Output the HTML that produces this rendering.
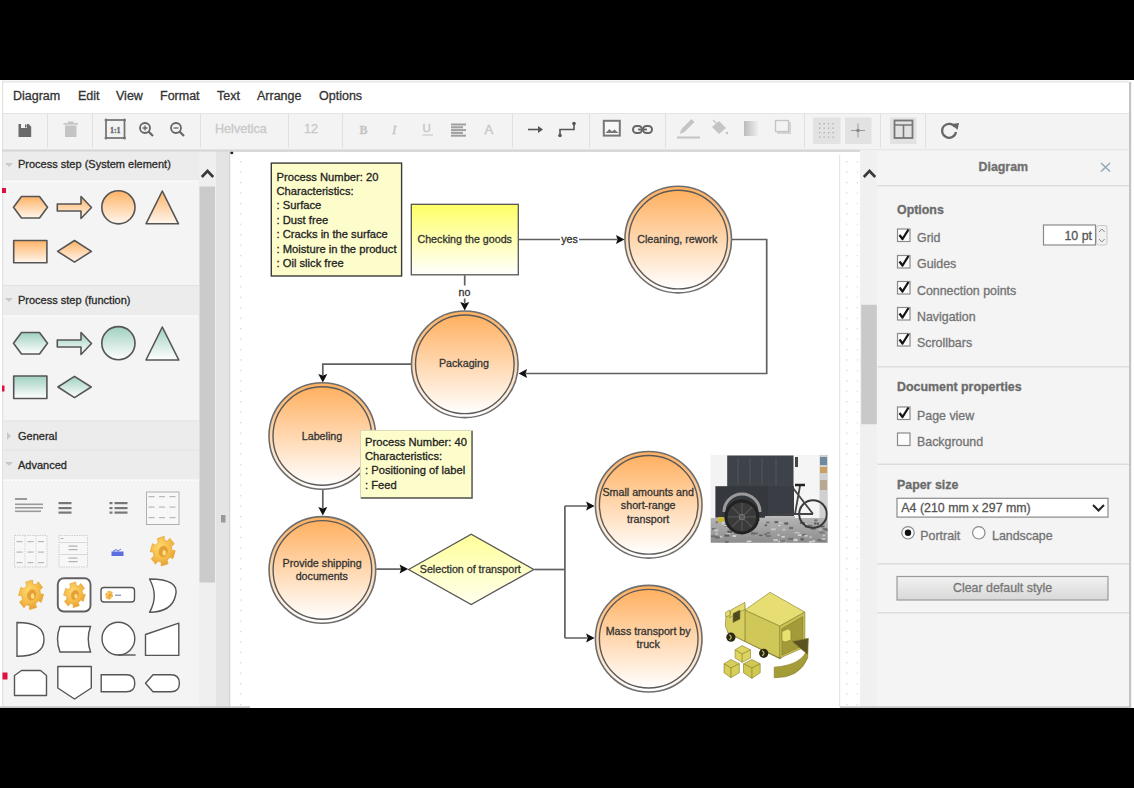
<!DOCTYPE html>
<html><head><meta charset="utf-8">
<style>
html,body{margin:0;padding:0;background:#000;width:1134px;height:788px;overflow:hidden}
svg{display:block;font-family:"Liberation Sans",sans-serif}
text{stroke:currentColor;stroke-width:0.3px}
</style></head><body>
<svg width="1134" height="788" viewBox="0 0 1134 788">
<defs>
<linearGradient id="gOr" x1="0" y1="0" x2="0" y2="1"><stop offset="0" stop-color="#ffb060"/><stop offset="1" stop-color="#ffffff"/></linearGradient>
<linearGradient id="gOrS" x1="0" y1="0" x2="0" y2="1"><stop offset="0" stop-color="#ffb366"/><stop offset="1" stop-color="#fff6ee"/></linearGradient>
<linearGradient id="gTe" x1="0" y1="0" x2="0" y2="1"><stop offset="0" stop-color="#9fd0c0"/><stop offset="1" stop-color="#ffffff"/></linearGradient>
<linearGradient id="gYe" x1="0" y1="0" x2="0" y2="1"><stop offset="0" stop-color="#ffff66"/><stop offset="1" stop-color="#ffffff"/></linearGradient>
<linearGradient id="gYe2" x1="0" y1="0" x2="0" y2="1"><stop offset="0" stop-color="#ffff99"/><stop offset="1" stop-color="#ffffee"/></linearGradient>
<linearGradient id="gBtn" x1="0" y1="0" x2="0" y2="1"><stop offset="0" stop-color="#f2f2f2"/><stop offset="1" stop-color="#d8d8d8"/></linearGradient>
<linearGradient id="gGrad" x1="0" y1="0" x2="1" y2="0"><stop offset="0" stop-color="#bbbbbb"/><stop offset="1" stop-color="#eeeeee"/></linearGradient>
<pattern id="dotsL" x="240.2" y="161.0" width="10.44" height="10.44" patternUnits="userSpaceOnUse"><rect x="0" y="0" width="1.3" height="1.3" fill="#d4d4d4"/></pattern>
<pattern id="dotsR1" x="846.2" y="161.0" width="10.44" height="10.44" patternUnits="userSpaceOnUse"><rect x="0" y="0" width="1.3" height="1.3" fill="#d4d4d4"/></pattern>
<pattern id="dotsR2" x="856.6" y="161.0" width="10.44" height="10.44" patternUnits="userSpaceOnUse"><rect x="0" y="0" width="1.3" height="1.3" fill="#d4d4d4"/></pattern>
</defs>

<!-- black background -->
<rect x="0" y="0" width="1134" height="788" fill="#000"/>
<!-- app frame -->
<rect x="0" y="80" width="1134" height="628" fill="#fff"/>

<!-- menu bar -->
<rect x="2" y="80.6" width="1127" height="2" fill="#e8e8e8"/>
<g font-size="12.5" fill="#333" color="#333">
<text x="13" y="99.6">Diagram</text>
<text x="78" y="99.6">Edit</text>
<text x="116" y="99.6">View</text>
<text x="160" y="99.6">Format</text>
<text x="217" y="99.6">Text</text>
<text x="257" y="99.6">Arrange</text>
<text x="319" y="99.6">Options</text>
</g>

<!-- toolbar -->
<rect x="2" y="113" width="1127" height="38" fill="#f3f3f3"/>
<rect x="2" y="113" width="1127" height="1" fill="#e4e4e4"/>
<rect x="2" y="149.2" width="1127" height="1" fill="#e4e4e4"/>

<g fill="#e0e0e0">
<rect x="47" y="114" width="1" height="34"/>
<rect x="92" y="114" width="1" height="34"/>
<rect x="200" y="114" width="1" height="34"/>
<rect x="288" y="114" width="1" height="34"/>
<rect x="342" y="114" width="1" height="34"/>
<rect x="512" y="114" width="1" height="34"/>
<rect x="589" y="114" width="1" height="34"/>
<rect x="665" y="114" width="1" height="34"/>
<rect x="804" y="114" width="1" height="34"/>
<rect x="880" y="114" width="1" height="34"/>
<rect x="925" y="114" width="1" height="34"/>
</g>
<!-- toolbar icons -->
<g id="tbicons">
<!-- save -->
<path d="M18.5 124 h10 l2.7 2.7 v10.3 h-12.7 z" fill="#6a6a6a"/>
<rect x="21" y="124" width="6" height="4" fill="#f3f3f3"/>
<rect x="25" y="124.5" width="1.5" height="3" fill="#6a6a6a"/>
<!-- trash -->
<rect x="63.5" y="123" width="14.5" height="1.6" fill="#c4c4c4"/>
<rect x="68" y="121.5" width="5.5" height="1.5" fill="#c4c4c4"/>
<rect x="65" y="125.5" width="11.5" height="11.5" fill="#c4c4c4"/>
<!-- 1:1 -->
<rect x="106" y="120" width="18.5" height="18" fill="none" stroke="#707070" stroke-width="1.7"/>
<circle cx="106" cy="120" r="1.5" fill="#777"/><circle cx="124.5" cy="120" r="1.5" fill="#777"/>
<circle cx="106" cy="138" r="1.5" fill="#777"/><circle cx="124.5" cy="138" r="1.5" fill="#777"/>
<text x="115.3" y="132.5" font-size="8" font-weight="bold" fill="#666" text-anchor="middle" font-family="Liberation Serif" color="#666">1:1</text>
<!-- zoom in -->
<circle cx="145" cy="128" r="5" fill="none" stroke="#666" stroke-width="1.8"/>
<path d="M148.5 131.5 l4.5 4.5" stroke="#666" stroke-width="2.2"/>
<path d="M142.5 128 h5 M145 125.5 v5" stroke="#666" stroke-width="1.3"/>
<!-- zoom out -->
<circle cx="176" cy="128" r="5" fill="none" stroke="#666" stroke-width="1.8"/>
<path d="M179.5 131.5 l4.5 4.5" stroke="#666" stroke-width="2.2"/>
<path d="M173.5 128 h5" stroke="#666" stroke-width="1.3"/>
<text x="215" y="133.3" font-size="12.6" fill="#c8c8c8" color="#c8c8c8">Helvetica</text>
<text x="304" y="133.3" font-size="12.6" fill="#c8c8c8" color="#c8c8c8">12</text>
<text x="359.5" y="134" font-size="12" font-weight="bold" fill="#c4c4c4" font-family="Liberation Serif" color="#c4c4c4">B</text>
<text x="392" y="134" font-size="13" font-style="italic" fill="#c4c4c4" font-family="Liberation Serif" color="#c4c4c4">I</text>
<text x="422.5" y="132" font-size="11.5" fill="#c4c4c4" color="#c4c4c4">U</text>
<rect x="422.5" y="134.5" width="10.5" height="1" fill="#c4c4c4"/>
<g fill="#a0a0a0"><rect x="451" y="123.5" width="15" height="2"/><rect x="451" y="126.3" width="12" height="2"/><rect x="451" y="129.1" width="15" height="2"/><rect x="451" y="131.9" width="12" height="2"/><rect x="451" y="134.7" width="15" height="2"/></g>
<text x="484.5" y="134" font-size="13" fill="#c4c4c4" color="#c4c4c4">A</text>
<!-- arrow -->
<path d="M528 129.5 h11" stroke="#555" stroke-width="1.6"/>
<path d="M538 126 l5 3.5 l-5 3.5 z" fill="#555"/>
<!-- waypoint -->
<path d="M560 135.5 v-6 h14 v-6" fill="none" stroke="#555" stroke-width="1.6"/>
<circle cx="560" cy="135.5" r="1.8" fill="#555"/><circle cx="574" cy="123.5" r="1.8" fill="#555"/>
<!-- image -->
<rect x="603.8" y="120.8" width="16" height="14.8" fill="#f8f8f8" stroke="#777" stroke-width="2"/>
<path d="M605.5 133 l4-4 l2.5 2.5 l2.5-2 l4 3.5 z" fill="#777"/>
<!-- link -->
<rect x="633" y="126" width="9" height="7" rx="3.5" fill="none" stroke="#666" stroke-width="2"/>
<rect x="643" y="126" width="9" height="7" rx="3.5" fill="none" stroke="#666" stroke-width="2"/>
<rect x="638" y="128.6" width="9" height="1.8" fill="#666"/>
<!-- pencil -->
<path d="M679.5 134 l2-5 l10-10 l3 3 l-10 10 z" fill="#c4c4c4"/>
<rect x="677" y="136.5" width="23" height="2" fill="#c4c4c4"/>
<!-- bucket -->
<path d="M712 127 l7-6 l7 7 l-7 6 z" fill="#c4c4c4"/>
<path d="M713 120 l5 5" stroke="#c4c4c4" stroke-width="1.2"/>
<circle cx="727" cy="133" r="1.3" fill="#c4c4c4"/>
<!-- gradient -->
<rect x="744" y="121" width="14" height="15" fill="url(#gGrad)"/>
<!-- shadow -->
<rect x="777" y="122" width="14" height="12" fill="#d4d4d4"/>
<rect x="775.5" y="120.5" width="13" height="11" fill="#f3f3f3" stroke="#c4c4c4" stroke-width="1.3"/>
<!-- grid btn -->
<rect x="813" y="117.5" width="27.5" height="26.5" fill="#e2e2e2"/>
<g fill="#aaa">
<rect x="819" y="123" width="1.3" height="1.3"/><rect x="823.5" y="123" width="1.3" height="1.3"/><rect x="828" y="123" width="1.3" height="1.3"/><rect x="832.5" y="123" width="1.3" height="1.3"/>
<rect x="819" y="127.5" width="1.3" height="1.3"/><rect x="823.5" y="127.5" width="1.3" height="1.3"/><rect x="828" y="127.5" width="1.3" height="1.3"/><rect x="832.5" y="127.5" width="1.3" height="1.3"/>
<rect x="819" y="132" width="1.3" height="1.3"/><rect x="823.5" y="132" width="1.3" height="1.3"/><rect x="828" y="132" width="1.3" height="1.3"/><rect x="832.5" y="132" width="1.3" height="1.3"/>
<rect x="819" y="136.5" width="1.3" height="1.3"/><rect x="823.5" y="136.5" width="1.3" height="1.3"/><rect x="828" y="136.5" width="1.3" height="1.3"/><rect x="832.5" y="136.5" width="1.3" height="1.3"/>
</g>
<!-- guides btn -->
<rect x="845" y="117.5" width="26.5" height="26.5" fill="#e2e2e2"/>
<path d="M851 130.5 h14 M858 123.5 v14" stroke="#999" stroke-width="1"/>
<rect x="856.5" y="129" width="3" height="3" fill="#888"/>
<!-- format btn -->
<rect x="890" y="117.5" width="26.5" height="26.5" fill="#e2e2e2"/>
<rect x="894.5" y="120.5" width="18" height="17.5" fill="none" stroke="#777" stroke-width="1.8"/>
<path d="M894.5 125 h18 M903.5 125 v13" stroke="#777" stroke-width="1.6"/>
<!-- refresh -->
<path d="M955 127 A7 7 0 1 0 956 132" fill="none" stroke="#666" stroke-width="2.2"/>
<path d="M951.5 124 l7.5-1 l-1.5 7 z" fill="#666"/>
</g>

<!-- LEFT SIDEBAR -->
<rect x="2" y="150" width="197" height="557" fill="#f4f4f4"/>
<rect x="2" y="81" width="1.2" height="626" fill="#e2e2e2"/>
<g fill="#ececec">
<rect x="3" y="151" width="196" height="29"/>
<rect x="3" y="286" width="196" height="29"/>
<rect x="3" y="421" width="196" height="29"/>
<rect x="3" y="450" width="196" height="29"/>
</g>
<g fill="#e2e2e2">
<rect x="3" y="285" width="196" height="1"/>
<rect x="3" y="420.5" width="196" height="1"/>
<rect x="3" y="449.5" width="196" height="1"/>
</g>
<g fill="#c8c8c8">
<path d="M5 163 h8 l-4 4 z"/>
<path d="M5 298 h8 l-4 4 z"/>
<path d="M7 432 v8 l4-4 z"/>
<path d="M5 462 h8 l-4 4 z"/>
</g>
<g font-size="11" fill="#2a2a2a" color="#2a2a2a" style="stroke-width:0.5px">
<text x="18" y="168.3">Process step (System element)</text>
<text x="18" y="304.3">Process step (function)</text>
<text x="18" y="440">General</text>
<text x="18" y="469">Advanced</text>
</g>
<g stroke="#ffffff" stroke-width="1" stroke-dasharray="2 2">
<path d="M3 181.5 H199"/><path d="M3 316.5 H199"/><path d="M3 480.5 H199"/>
</g>
<!-- red marks -->
<g fill="#e0103c">
<rect x="2" y="188" width="4" height="5"/>
<rect x="2" y="385.5" width="2.5" height="6"/>
<rect x="2.5" y="672.5" width="5" height="7"/>
</g>

<!-- section 1 shapes -->
<g fill="url(#gOrS)" stroke="#555" stroke-width="1.6" stroke-linejoin="round">
<path d="M13.5 207.2 L21.5 196.5 H39.5 L47.5 207.2 L39.5 218 H21.5 Z"/>
<path d="M57.3 204 H81 V196.5 L91.5 207.5 L81 218.5 V211 H57.3 Z"/>
<circle cx="118.4" cy="207.3" r="16.6"/>
<path d="M162.3 191 L178.5 223.8 H146 Z"/>
<rect x="13.7" y="240.5" width="33.2" height="22.2"/>
<path d="M57.6 251.3 L74.5 240.5 L91.4 251.3 L74.5 262.2 Z"/>
</g>
<!-- section 2 shapes -->
<g fill="url(#gTe)" stroke="#555" stroke-width="1.6" stroke-linejoin="round">
<path d="M13.5 343.2 L21.5 332.5 H39.5 L47.5 343.2 L39.5 354 H21.5 Z"/>
<path d="M57.3 340 H81 V332.5 L91.5 343.5 L81 354.5 V347 H57.3 Z"/>
<circle cx="118.4" cy="343.2" r="16.6"/>
<path d="M162.3 327 L178.8 360 H146 Z"/>
<rect x="13.7" y="376" width="33.2" height="22.5"/>
<path d="M57.9 387 L74.5 376.3 L91.2 387 L74.5 397.7 Z"/>
</g>

<!-- scrollbar left -->
<rect x="199" y="151" width="17" height="556" fill="#efefef"/>
<rect x="199.5" y="186.5" width="15.5" height="396" fill="#cbcbcb"/>
<path d="M201.8 177 L207.5 171 L213.2 177" fill="none" stroke="#3a3a3a" stroke-width="2.6"/>
<!-- splitter -->
<rect x="216" y="151" width="14" height="556" fill="#e4e4e4"/>
<rect x="229" y="151" width="1.5" height="556" fill="#d4d4d4"/>
<rect x="221" y="515" width="4.5" height="7.5" fill="#999"/>

<!-- CANVAS -->
<rect x="230.5" y="151" width="629.5" height="556" fill="#fff"/>
<rect x="230.5" y="151" width="629.5" height="1" fill="#e0e0e0"/>
<circle cx="231.8" cy="152.8" r="1.5" fill="#222"/>
<rect x="240" y="156.5" width="2" height="550" fill="url(#dotsL)"/>
<rect x="839" y="155" width="1.2" height="552" fill="#e6e6e6"/>
<rect x="846" y="156.5" width="2" height="550" fill="url(#dotsR1)"/>
<rect x="856.5" y="156.5" width="2" height="550" fill="url(#dotsR2)"/>

<rect x="2" y="149.8" width="858" height="1.8" fill="#d6d6d6"/>
<!-- right scroll column -->
<rect x="860" y="151" width="17.5" height="556" fill="#f0f0f0"/>
<rect x="861.2" y="304.8" width="15.6" height="119.4" fill="#c9c9c9"/>
<path d="M863.8 177 L869.5 171 L875.2 177" fill="none" stroke="#3a3a3a" stroke-width="2.6"/>

<!-- RIGHT PANEL -->
<rect x="877.5" y="151" width="251.5" height="556" fill="#f4f4f4"/>
<rect x="1129" y="82" width="2.2" height="626" fill="#c4c4c4"/>
<g fill="#dcdcdc">
<rect x="877.5" y="185" width="251.5" height="1.5"/>
<rect x="877.5" y="366" width="251.5" height="1.5"/>
<rect x="877.5" y="463.5" width="251.5" height="1.5"/>
<rect x="877.5" y="563" width="251.5" height="1.5"/>
<rect x="877.5" y="612" width="251.5" height="1.5"/>
</g>
<text x="1003.3" y="171.3" font-size="12.4" font-weight="bold" fill="#707070" text-anchor="middle" color="#707070">Diagram</text>
<path d="M1101 163 l9 8.5 M1110 163 l-9 8.5" stroke="#8fa6b2" stroke-width="1.4"/>
<g font-size="12.4" font-weight="bold" fill="#6b6b6b" color="#6b6b6b">
<text x="897" y="213.8">Options</text>
<text x="897" y="391.4">Document properties</text>
<text x="897" y="489.1">Paper size</text>
</g>
<g font-size="12.4" fill="#737373" color="#737373">
<text x="917" y="241.8">Grid</text>
<text x="917" y="268.4">Guides</text>
<text x="917" y="294.6">Connection points</text>
<text x="917" y="320.6">Navigation</text>
<text x="917" y="346.6">Scrollbars</text>
<text x="917" y="419.9">Page view</text>
<text x="917" y="445.6">Background</text>
<text x="920.3" y="539.5">Portrait</text>
<text x="992" y="539.5">Landscape</text>
</g>
<!-- checkboxes -->
<g fill="#fcfcfc" stroke="#8a8a8a" stroke-width="1.2">
<rect x="897.5" y="229" width="12.5" height="12.5"/>
<rect x="897.5" y="255.5" width="12.5" height="12.5"/>
<rect x="897.5" y="281.5" width="12.5" height="12.5"/>
<rect x="897.5" y="307.5" width="12.5" height="12.5"/>
<rect x="897.5" y="333.5" width="12.5" height="12.5"/>
<rect x="897.5" y="407" width="12.5" height="12.5"/>
<rect x="897.5" y="433" width="12.5" height="12.5"/>
</g>
<g fill="none" stroke="#151515" stroke-width="2.3" stroke-linejoin="round">
<path d="M899.5 235 l3 4 l6-9.5"/>
<path d="M899.5 261.5 l3 4 l6-9.5"/>
<path d="M899.5 287.5 l3 4 l6-9.5"/>
<path d="M899.5 313.5 l3 4 l6-9.5"/>
<path d="M899.5 339.5 l3 4 l6-9.5"/>
<path d="M899.5 413 l3 4 l6-9.5"/>
</g>
<!-- grid size input -->
<rect x="1043.5" y="225" width="52" height="20" fill="#fff" stroke="#8a8a8a" stroke-width="1.2"/>
<text x="1092" y="240" font-size="12.4" fill="#555" text-anchor="end" color="#555">10 pt</text>
<rect x="1096.5" y="225.5" width="10.5" height="19.5" rx="2" fill="#f0f0f0" stroke="#c8c8c8" stroke-width="1"/>
<path d="M1099 232 l2.8-3 l2.8 3 M1099 239 l2.8 3 l2.8-3" fill="none" stroke="#888" stroke-width="1"/>
<!-- select -->
<rect x="897" y="498.3" width="211" height="18.8" fill="#fff" stroke="#8a8a8a" stroke-width="1.2"/>
<text x="901.3" y="512.2" font-size="12.4" fill="#555" color="#555">A4 (210 mm x 297 mm)</text>
<path d="M1093 505 l5.5 5.5 l5.5-5.5" fill="none" stroke="#222" stroke-width="2"/>
<!-- radios -->
<circle cx="908" cy="532.8" r="6.2" fill="#fcfcfc" stroke="#8a8a8a" stroke-width="1.2"/>
<circle cx="908" cy="532.8" r="3.2" fill="#111"/>
<circle cx="978.8" cy="532.8" r="6.2" fill="#fcfcfc" stroke="#8a8a8a" stroke-width="1.2"/>
<!-- button -->
<rect x="897" y="576.5" width="211" height="23.5" fill="url(#gBtn)" stroke="#9a9a9a" stroke-width="1.2"/>
<text x="1002.6" y="592" font-size="12.4" fill="#777" text-anchor="middle" color="#777">Clear default style</text>

<!-- bottom frame line -->
<rect x="0" y="706.3" width="250" height="1.7" fill="#c4c4c4"/>
<rect x="840" y="706.3" width="291.2" height="1.7" fill="#c4c4c4"/>
<rect x="0" y="708" width="1134" height="80" fill="#000"/>


<g id="advanced">
<defs>
<radialGradient id="gGear" cx="0.4" cy="0.35" r="0.7"><stop offset="0" stop-color="#ffd86a"/><stop offset="0.6" stop-color="#f4bb48"/><stop offset="1" stop-color="#e39a30"/></radialGradient>
</defs>
<!-- row1 -->
<g fill="#9a9a9a">
<rect x="15" y="498" width="12" height="2"/>
<rect x="15" y="503.5" width="28" height="1.6"/>
<rect x="15" y="507" width="28" height="1.6"/>
<rect x="15" y="510.5" width="26" height="1.6"/>
</g>
<g fill="#777">
<rect x="58.5" y="502" width="13" height="2.2"/>
<rect x="58.5" y="507" width="13" height="2.2"/>
<rect x="58.5" y="511.5" width="13" height="2.2"/>
<rect x="109.5" y="502" width="3" height="2.2"/><rect x="114.5" y="502" width="13" height="2.2"/>
<rect x="109.5" y="507" width="3" height="2.2"/><rect x="114.5" y="507" width="13" height="2.2"/>
<rect x="109.5" y="511.5" width="3" height="2.2"/><rect x="114.5" y="511.5" width="13" height="2.2"/>
</g>
<rect x="146.5" y="492" width="32.5" height="32.5" fill="#f7f7f7" stroke="#b0b0b0" stroke-width="1"/>
<g fill="#b8b8b8">
<rect x="148.5" y="496" width="6" height="1.2"/><rect x="159" y="496" width="6" height="1.2"/><rect x="169.5" y="496" width="6" height="1.2"/>
<rect x="148.5" y="506.5" width="6" height="1.2"/><rect x="159" y="506.5" width="6" height="1.2"/><rect x="169.5" y="506.5" width="6" height="1.2"/>
<rect x="148.5" y="517" width="6" height="1.2"/><rect x="159" y="517" width="6" height="1.2"/><rect x="169.5" y="517" width="6" height="1.2"/>
</g>
<!-- row2 -->
<rect x="14.5" y="535.5" width="32.5" height="31.5" fill="#f7f7f7" stroke="#c4c4c4" stroke-width="0.8" stroke-dasharray="1.5 1"/>
<path d="M25 535.5 V567 M36 535.5 V567" stroke="#d0d0d0" stroke-width="0.8" stroke-dasharray="1.5 1"/>
<g fill="#b8b8b8">
<rect x="16.5" y="541" width="6" height="1.2"/><rect x="27.5" y="541" width="6" height="1.2"/><rect x="38" y="541" width="6" height="1.2"/>
<rect x="16.5" y="551.5" width="6" height="1.2"/><rect x="27.5" y="551.5" width="6" height="1.2"/><rect x="38" y="551.5" width="6" height="1.2"/>
<rect x="16.5" y="562" width="6" height="1.2"/><rect x="27.5" y="562" width="6" height="1.2"/><rect x="38" y="562" width="6" height="1.2"/>
</g>
<rect x="59" y="535.5" width="28.5" height="31.5" fill="#f7f7f7" stroke="#c4c4c4" stroke-width="0.8" stroke-dasharray="1.5 1"/>
<path d="M59 542.5 H87.5 M59 554.5 H87.5" stroke="#d0d0d0" stroke-width="0.8"/>
<g fill="#b0b0b0">
<rect x="60.5" y="538" width="3" height="1"/>
<rect x="68.5" y="545.5" width="9" height="1.2"/><rect x="68.5" y="549" width="9" height="1.2"/>
<rect x="68.5" y="557.5" width="9" height="1.2"/><rect x="68.5" y="561" width="9" height="1.2"/>
</g>
<rect x="111.5" y="551.5" width="12" height="4.5" fill="#5b6fe0"/>
<path d="M113 551.5 l3-2 l2 1.5 l3-2" stroke="#5b6fe0" stroke-width="1" fill="none"/>
<path d="M172.0 550.4 L175.2 550.7 L172.8 558.7 L169.9 557.1 L167.1 560.2 L168.1 563.8 L161.2 566.0 L161.2 562.1 L157.8 561.1 L155.6 564.2 L151.2 558.5 L154.0 556.2 L153.4 552.0 L150.2 551.7 L152.6 543.7 L155.5 545.3 L158.3 542.2 L157.3 538.6 L164.2 536.4 L164.2 540.3 L167.6 541.3 L169.8 538.2 L174.2 543.9 L171.4 546.2 Z" fill="url(#gGear)" stroke="#e8a838" stroke-width="0.8" stroke-linejoin="round"/><ellipse cx="163.2" cy="551.2" rx="4.5" ry="5.7" transform="rotate(17 162.7 551.2)" fill="#e09530" opacity="0.8"/><ellipse cx="164.2" cy="552.7" rx="1.8" ry="2.7" fill="#ffe080"/>
<!-- row3 -->
<path d="M40.4 594.0 L43.6 594.3 L41.2 602.3 L38.3 600.7 L35.5 603.8 L36.5 607.4 L29.6 609.6 L29.6 605.7 L26.2 604.7 L24.0 607.8 L19.6 602.1 L22.4 599.8 L21.8 595.6 L18.6 595.3 L21.0 587.3 L23.9 588.9 L26.7 585.8 L25.7 582.2 L32.6 580.0 L32.6 583.9 L36.0 584.9 L38.2 581.8 L42.6 587.5 L39.8 589.8 Z" fill="url(#gGear)" stroke="#e8a838" stroke-width="0.8" stroke-linejoin="round"/><ellipse cx="31.6" cy="594.8" rx="4.5" ry="5.7" transform="rotate(17 31.1 594.8)" fill="#e09530" opacity="0.8"/><ellipse cx="32.6" cy="596.3" rx="1.8" ry="2.7" fill="#ffe080"/>
<rect x="57.8" y="578.2" width="32.7" height="33.3" rx="6" fill="#fff" stroke="#606060" stroke-width="1.9"/>
<path d="M82.5 594.1 L85.3 594.4 L83.2 601.3 L80.7 599.9 L78.3 602.6 L79.2 605.7 L73.2 607.6 L73.2 604.3 L70.2 603.3 L68.3 606.1 L64.5 601.2 L67.0 599.1 L66.5 595.5 L63.7 595.2 L65.8 588.3 L68.3 589.7 L70.7 587.0 L69.8 583.9 L75.8 582.0 L75.8 585.3 L78.8 586.3 L80.7 583.5 L84.5 588.4 L82.0 590.5 Z" fill="url(#gGear)" stroke="#e8a838" stroke-width="0.8" stroke-linejoin="round"/><ellipse cx="75.0" cy="594.8" rx="3.9" ry="4.9" transform="rotate(17 74.5 594.8)" fill="#e09530" opacity="0.8"/><ellipse cx="76.0" cy="596.3" rx="1.6" ry="2.3" fill="#ffe080"/>
<rect x="101" y="587.5" width="33.5" height="14.5" rx="3" fill="#fff" stroke="#555" stroke-width="1.4"/>
<path d="M111.8 595.0 L112.7 595.1 L112.0 597.3 L111.2 596.9 L110.4 597.7 L110.7 598.7 L108.8 599.3 L108.8 598.3 L107.8 598.0 L107.2 598.8 L106.0 597.3 L106.8 596.6 L106.6 595.4 L105.7 595.3 L106.4 593.1 L107.2 593.5 L108.0 592.7 L107.7 591.7 L109.6 591.1 L109.6 592.1 L110.6 592.4 L111.2 591.6 L112.4 593.1 L111.6 593.8 Z" fill="url(#gGear)" stroke="#e8a838" stroke-width="0.8" stroke-linejoin="round"/><ellipse cx="109.7" cy="595.2" rx="1.3" ry="1.6" transform="rotate(17 109.2 595.2)" fill="#e09530" opacity="0.8"/><ellipse cx="110.7" cy="596.7" rx="0.5" ry="0.8" fill="#ffe080"/>
<path d="M115 595.2 h6" stroke="#7890b0" stroke-width="1.2"/>
<path d="M149.5 579 Q180 579 175.5 595.5 Q172 612 149.5 612.3 Q159 596 149.5 579 Z" fill="#fff" stroke="#555" stroke-width="1.4" stroke-linejoin="round"/>
<!-- row4 -->
<path d="M17 622.5 Q44 622.5 44 639.5 Q44 656.3 17 656.3 Z" fill="#fff" stroke="#555" stroke-width="1.4"/>
<path d="M60 626.5 H90.5 Q86 639 90.5 652 H60 Q55 639 60 626.5 Z" fill="#fff" stroke="#555" stroke-width="1.4"/>
<circle cx="118.4" cy="638.6" r="16.4" fill="#fff" stroke="#555" stroke-width="1.4"/>
<path d="M118 655 H135.6" stroke="#555" stroke-width="1.4"/>
<path d="M145.5 634.5 L178.8 623.2 V655.4 H145.5 Z" fill="#fff" stroke="#555" stroke-width="1.4" stroke-linejoin="round"/>
<!-- row5 -->
<path d="M21.5 670.5 H40.5 L46.5 675.5 V695.5 H14.5 V675.5 Z" fill="#fff" stroke="#555" stroke-width="1.4" stroke-linejoin="round"/>
<path d="M57.8 666.5 H91.3 V688 L74.5 699 L57.8 688 Z" fill="#fff" stroke="#555" stroke-width="1.4" stroke-linejoin="round"/>
<path d="M101.2 674.8 H126.5 Q134.8 674.8 134.8 683.3 Q134.8 691.8 126.5 691.8 H101.2 Z" fill="#fff" stroke="#555" stroke-width="1.4"/>
<path d="M145.5 683.3 L153 674.8 H171 Q179.4 674.8 179.4 683.3 Q179.4 691.8 171 691.8 H153 Z" fill="#fff" stroke="#555" stroke-width="1.4" stroke-linejoin="round"/>
</g>


<g id="diagram">
<!-- edges -->
<g fill="none" stroke="#606060" stroke-width="1.7">
<path d="M519 239.5 H617"/>
<path d="M732 239.5 H766.7 V373.5 H526"/>
<path d="M464.7 275.3 V303"/>
<path d="M411 364.2 H322.8 V375"/>
<path d="M322.8 489.5 V508"/>
<path d="M376.3 569.1 H401"/>
<path d="M534.3 569.5 H564.9"/>
<path d="M564.9 506 V638 M564.9 506 H587 M564.9 638 H587"/>
</g>
<g fill="#111">
<path d="M624.5 239.5 l-8.5 -4.5 l1.5 4.5 l-1.5 4.5 z"/>
<path d="M518.6 373.5 l8.5 -4.5 l-1.5 4.5 l1.5 4.5 z"/>
<path d="M464.7 310.4 l-4.5 -8.5 l4.5 1.5 l4.5 -1.5 z"/>
<path d="M322.8 382.4 l-4.5 -8.5 l4.5 1.5 l4.5 -1.5 z"/>
<path d="M322.8 515.5 l-4.5 -8.5 l4.5 1.5 l4.5 -1.5 z"/>
<path d="M408.1 569.1 l-8.5 -4.5 l1.5 4.5 l-1.5 4.5 z"/>
<path d="M594.6 506 l-8.5 -4.5 l1.5 4.5 l-1.5 4.5 z"/>
<path d="M594.6 638 l-8.5 -4.5 l1.5 4.5 l-1.5 4.5 z"/>
</g>
<!-- labels on edges -->
<rect x="560" y="232" width="19" height="13" fill="#fff"/>
<text x="569.5" y="243" font-size="10.7" fill="#333" text-anchor="middle" color="#333">yes</text>
<rect x="456" y="285.5" width="17" height="13" fill="#fff"/>
<text x="464.5" y="296" font-size="10.7" fill="#333" text-anchor="middle" color="#333">no</text>

<!-- note 1 -->
<rect x="271.3" y="163.1" width="130.3" height="112.9" fill="#fdfdcc" stroke="#3a3a3a" stroke-width="1.4"/>
<g font-size="11.2" fill="#222" color="#222">
<text x="276.5" y="180.6">Process Number: 20</text>
<text x="276.5" y="195.0">Characteristics:</text>
<text x="276.5" y="209.4">: Surface</text>
<text x="276.5" y="223.8">: Dust free</text>
<text x="276.5" y="238.2">: Cracks in the surface</text>
<text x="276.5" y="252.6">: Moisture in the product</text>
<text x="276.5" y="267.0">: Oil slick free</text>
</g>
<!-- checking goods -->
<rect x="411.3" y="204.3" width="107" height="70.5" fill="url(#gYe)" stroke="#555" stroke-width="1.3"/>
<text x="464.7" y="243.3" font-size="10.7" fill="#333" text-anchor="middle" color="#333">Checking the goods</text>

<!-- circles -->
<g>
<circle cx="678.2" cy="239.6" r="53.3" fill="url(#gOr)" stroke="#6e6e6e" stroke-width="1.6"/>
<circle cx="678.2" cy="239.6" r="49.3" fill="url(#gOr)" stroke="#5a5a5a" stroke-width="1.4"/>
<circle cx="464.8" cy="364.3" r="53.3" fill="url(#gOr)" stroke="#6e6e6e" stroke-width="1.6"/>
<circle cx="464.8" cy="364.3" r="49.3" fill="url(#gOr)" stroke="#5a5a5a" stroke-width="1.4"/>
<circle cx="322.3" cy="436.0" r="53.3" fill="url(#gOr)" stroke="#6e6e6e" stroke-width="1.6"/>
<circle cx="322.3" cy="436.0" r="49.3" fill="url(#gOr)" stroke="#5a5a5a" stroke-width="1.4"/>
<circle cx="322.4" cy="569.9" r="53.3" fill="url(#gOr)" stroke="#6e6e6e" stroke-width="1.6"/>
<circle cx="322.4" cy="569.9" r="49.3" fill="url(#gOr)" stroke="#5a5a5a" stroke-width="1.4"/>
<circle cx="648.7" cy="504.8" r="53.3" fill="url(#gOr)" stroke="#6e6e6e" stroke-width="1.6"/>
<circle cx="648.7" cy="504.8" r="49.3" fill="url(#gOr)" stroke="#5a5a5a" stroke-width="1.4"/>
<circle cx="648.7" cy="638.7" r="53.3" fill="url(#gOr)" stroke="#6e6e6e" stroke-width="1.6"/>
<circle cx="648.7" cy="638.7" r="49.3" fill="url(#gOr)" stroke="#5a5a5a" stroke-width="1.4"/>
</g>
<g font-size="10.7" fill="#333" text-anchor="middle" color="#333">
<text x="677.3" y="242.9">Cleaning, rework</text>
<text x="463.9" y="367.3">Packaging</text>
<text x="322" y="440.2">Labeling</text>
<text x="322.1" y="567">Provide shipping</text>
<text x="321.8" y="580">documents</text>
<text x="648.2" y="496">Small amounts and</text>
<text x="648.2" y="509.3">short-range</text>
<text x="648.2" y="522.5">transport</text>
<text x="648.2" y="634.7">Mass transport by</text>
<text x="648.2" y="647.9">truck</text>
</g>

<!-- note 2 -->
<rect x="360.5" y="430.4" width="112" height="67.6" fill="#fdfdcc" stroke="#d8d8b8" stroke-width="1"/>
<path d="M472 431 V498 H361" fill="none" stroke="#555" stroke-width="1.4"/>
<g font-size="11.2" fill="#222" color="#222">
<text x="365" y="446">Process Number: 40</text>
<text x="365" y="460.2">Characteristics:</text>
<text x="365" y="474.4">: Positioning of label</text>
<text x="365" y="488.6">: Feed</text>
</g>


<g id="photo">
<defs>
<clipPath id="cpPhoto"><rect x="710.5" y="454.8" width="117.2" height="87.9"/></clipPath>
<linearGradient id="gGround" x1="0" y1="0" x2="0" y2="1"><stop offset="0" stop-color="#b4b4b4"/><stop offset="1" stop-color="#8c8c8c"/></linearGradient>
</defs>
<g clip-path="url(#cpPhoto)">
<rect x="710.5" y="454.8" width="117.2" height="87.9" fill="#ececec"/>
<rect x="710.5" y="454.8" width="17" height="70" fill="#f3f3f3"/>
<rect x="793.5" y="454.8" width="27" height="70" fill="#f5f5f5"/>
<rect x="819.5" y="454.8" width="8.5" height="88" fill="#d0d0d0"/>
<rect x="820" y="457" width="7" height="8" fill="#6f8aa0"/>
<rect x="820" y="467" width="7" height="6" fill="#c9a060"/>
<rect x="820" y="480" width="7" height="10" fill="#b8a890"/>
<rect x="727.2" y="455.5" width="66.3" height="62" fill="#3e4249"/>
<path d="M738 458 V485 M750 458 V485 M762 458 V485 M776 458 V485" stroke="#50555c" stroke-width="1.2"/>
<rect x="795" y="457" width="3" height="10" fill="#444"/>
<rect x="710.5" y="518" width="117.2" height="25" fill="url(#gGround)"/>
<rect x="738.0" y="531.2" width="3.1" height="2.0" fill="#5e5e5e"/>
<rect x="718.1" y="519.3" width="4.5" height="1.5" fill="#7a7a7a"/>
<rect x="732.6" y="535.1" width="3.6" height="1.9" fill="#d2d2d2"/>
<rect x="784.3" y="522.4" width="3.9" height="2.3" fill="#5e5e5e"/>
<rect x="755.5" y="519.3" width="4.3" height="1.4" fill="#5e5e5e"/>
<rect x="715.4" y="536.6" width="4.5" height="1.6" fill="#5e5e5e"/>
<rect x="793.5" y="538.8" width="4.1" height="2.4" fill="#d2d2d2"/>
<rect x="794.6" y="532.0" width="4.9" height="1.4" fill="#c4c4c4"/>
<rect x="721.8" y="522.1" width="2.7" height="2.5" fill="#d2d2d2"/>
<rect x="800.5" y="538.2" width="3.3" height="2.3" fill="#5e5e5e"/>
<rect x="751.0" y="532.2" width="3.8" height="2.4" fill="#6e6e6e"/>
<rect x="809.4" y="541.3" width="4.0" height="1.4" fill="#c4c4c4"/>
<rect x="821.9" y="539.4" width="3.7" height="2.1" fill="#7a7a7a"/>
<rect x="783.6" y="541.2" width="2.8" height="1.4" fill="#d2d2d2"/>
<rect x="809.1" y="541.3" width="2.3" height="2.2" fill="#d2d2d2"/>
<rect x="814.1" y="519.5" width="3.3" height="1.7" fill="#6e6e6e"/>
<rect x="715.6" y="532.8" width="2.1" height="2.1" fill="#c4c4c4"/>
<rect x="774.1" y="539.7" width="2.8" height="1.5" fill="#6e6e6e"/>
<rect x="746.3" y="520.7" width="3.8" height="1.2" fill="#7a7a7a"/>
<rect x="822.7" y="525.6" width="2.8" height="2.1" fill="#c4c4c4"/>
<rect x="746.7" y="540.6" width="4.7" height="1.7" fill="#d2d2d2"/>
<rect x="811.0" y="527.7" width="4.6" height="2.1" fill="#6e6e6e"/>
<rect x="782.1" y="540.2" width="3.5" height="1.8" fill="#7a7a7a"/>
<rect x="818.7" y="528.8" width="2.8" height="1.6" fill="#c4c4c4"/>
<rect x="711.8" y="528.3" width="3.7" height="1.2" fill="#5e5e5e"/>
<rect x="778.6" y="522.0" width="3.9" height="1.6" fill="#c4c4c4"/>
<rect x="789.0" y="526.9" width="4.1" height="2.2" fill="#6e6e6e"/>
<rect x="778.6" y="540.5" width="2.1" height="1.7" fill="#d2d2d2"/>
<rect x="745.0" y="532.5" width="2.5" height="1.4" fill="#c4c4c4"/>
<rect x="808.0" y="524.9" width="4.4" height="1.3" fill="#6e6e6e"/>
<rect x="822.7" y="534.4" width="2.4" height="1.9" fill="#c4c4c4"/>
<rect x="738.1" y="523.2" width="3.3" height="2.1" fill="#6e6e6e"/>
<rect x="779.9" y="540.4" width="4.0" height="1.5" fill="#7a7a7a"/>
<rect x="719.7" y="535.7" width="2.7" height="1.9" fill="#c4c4c4"/>
<rect x="736.5" y="521.7" width="3.6" height="1.4" fill="#5e5e5e"/>
<rect x="731.7" y="525.3" width="4.4" height="2.0" fill="#5e5e5e"/>
<rect x="750.4" y="521.9" width="2.9" height="2.2" fill="#c4c4c4"/>
<rect x="764.2" y="533.3" width="2.9" height="1.9" fill="#6e6e6e"/>
<rect x="816.8" y="522.5" width="2.0" height="2.4" fill="#5e5e5e"/>
<rect x="824.5" y="528.8" width="4.9" height="2.4" fill="#7a7a7a"/>
<rect x="714.2" y="529.3" width="4.3" height="2.2" fill="#c4c4c4"/>
<rect x="773.3" y="539.0" width="4.6" height="2.3" fill="#c4c4c4"/>
<rect x="724.4" y="524.5" width="2.1" height="2.2" fill="#5e5e5e"/>
<rect x="817.2" y="539.2" width="4.7" height="2.0" fill="#6e6e6e"/>
<rect x="766.1" y="521.7" width="3.5" height="1.5" fill="#6e6e6e"/>
<rect x="771.1" y="528.3" width="4.8" height="2.0" fill="#c4c4c4"/>
<rect x="725.0" y="540.9" width="3.6" height="2.3" fill="#6e6e6e"/>
<rect x="751.1" y="523.4" width="3.6" height="2.3" fill="#7a7a7a"/>
<rect x="738.2" y="525.2" width="4.7" height="1.4" fill="#6e6e6e"/>
<rect x="766.8" y="531.8" width="3.2" height="2.2" fill="#7a7a7a"/>
<rect x="741.5" y="530.9" width="3.3" height="1.8" fill="#6e6e6e"/>
<rect x="809.5" y="536.4" width="2.1" height="1.3" fill="#d2d2d2"/>
<rect x="823.1" y="538.2" width="2.3" height="1.9" fill="#c4c4c4"/>
<rect x="728.6" y="520.6" width="3.2" height="1.7" fill="#c4c4c4"/>
<rect x="752.2" y="523.3" width="3.0" height="1.4" fill="#5e5e5e"/>
<rect x="710.9" y="535.3" width="4.4" height="1.9" fill="#6e6e6e"/>
<rect x="753.6" y="532.6" width="4.3" height="1.7" fill="#6e6e6e"/>
<rect x="782.4" y="528.7" width="3.1" height="1.8" fill="#c4c4c4"/>
<rect x="759.1" y="534.6" width="3.4" height="1.5" fill="#5e5e5e"/>
<rect x="741.7" y="532.3" width="4.4" height="1.5" fill="#7a7a7a"/>
<rect x="812.1" y="540.1" width="3.1" height="2.4" fill="#c4c4c4"/>
<rect x="724.5" y="534.5" width="4.8" height="2.2" fill="#5e5e5e"/>
<rect x="802.0" y="534.0" width="4.2" height="1.9" fill="#6e6e6e"/>
<rect x="804.2" y="535.1" width="3.4" height="1.5" fill="#d2d2d2"/>
<rect x="715.6" y="521.1" width="2.3" height="2.3" fill="#7a7a7a"/>
<rect x="805.1" y="526.7" width="4.6" height="1.2" fill="#6e6e6e"/>
<rect x="788.3" y="537.8" width="4.9" height="2.0" fill="#6e6e6e"/>
<rect x="714.7" y="536.3" width="3.5" height="2.1" fill="#6e6e6e"/>
<rect x="774.5" y="521.2" width="3.7" height="1.9" fill="#5e5e5e"/>
<rect x="731.3" y="520.7" width="5.0" height="2.0" fill="#d2d2d2"/>
<rect x="781.6" y="536.0" width="3.2" height="1.7" fill="#d2d2d2"/>
<rect x="818.9" y="531.5" width="4.9" height="1.7" fill="#7a7a7a"/>
<rect x="822.9" y="528.3" width="4.2" height="1.4" fill="#5e5e5e"/>
<rect x="797.8" y="534.2" width="3.6" height="1.8" fill="#d2d2d2"/>
<rect x="814.1" y="522.4" width="2.3" height="2.2" fill="#5e5e5e"/>
<rect x="820.3" y="532.2" width="4.6" height="1.4" fill="#7a7a7a"/>
<rect x="727.4" y="530.6" width="4.8" height="2.3" fill="#5e5e5e"/>
<rect x="820.6" y="525.7" width="4.1" height="1.7" fill="#5e5e5e"/>
<rect x="778.0" y="525.0" width="2.7" height="1.2" fill="#d2d2d2"/>
<rect x="803.4" y="523.5" width="3.7" height="1.5" fill="#d2d2d2"/>
<rect x="799.9" y="522.2" width="5.0" height="1.8" fill="#5e5e5e"/>
<rect x="734.3" y="532.1" width="4.7" height="2.0" fill="#6e6e6e"/>
<rect x="766.1" y="535.2" width="4.6" height="1.7" fill="#6e6e6e"/>
<rect x="764.5" y="524.2" width="2.7" height="2.1" fill="#6e6e6e"/>
<rect x="821.2" y="538.2" width="2.7" height="1.4" fill="#c4c4c4"/>
<rect x="726.4" y="533.0" width="4.0" height="1.2" fill="#c4c4c4"/>
<rect x="730.1" y="520.0" width="2.5" height="1.3" fill="#6e6e6e"/>
<rect x="724.1" y="524.9" width="4.7" height="1.2" fill="#d2d2d2"/>
<rect x="777.5" y="534.2" width="2.0" height="1.6" fill="#d2d2d2"/>
<rect x="754.4" y="520.8" width="3.9" height="2.2" fill="#d2d2d2"/>
<rect x="715.4" y="486.2" width="53" height="31.4" fill="#35383d"/>
<rect x="768" y="486" width="26" height="30" fill="#3a3e44"/>
<path d="M724 512 A18 18 0 0 1 760 512" fill="none" stroke="#9a9a9a" stroke-width="3"/>
<circle cx="741.9" cy="516.9" r="16" fill="#3a3a3a" stroke="#222" stroke-width="3"/>
<circle cx="741.9" cy="516.9" r="3" fill="#aaa"/>
<path d="M741.9 503 V531 M728 516.9 H756 M732 507 L752 527 M752 507 L732 527" stroke="#555" stroke-width="1.2"/>
<circle cx="813" cy="514" r="13.8" fill="none" stroke="#3a3a3a" stroke-width="2"/>
<path d="M793 488 L813 514 M800 486 L795 514 L770 516 M794 514 L813 514" fill="none" stroke="#444" stroke-width="1.8"/>
<path d="M795 485 h10" stroke="#222" stroke-width="2.5"/>
<path d="M765 517 h30" stroke="#bbb" stroke-width="2"/>
<rect x="718" y="517" width="6" height="5" fill="#c9b830"/>
</g>
</g>
<g id="truck">
<path d="M 728.1 633.0 L 744.9 641.4 L 779.8 658.8 L 781.9 657.4 L 744.9 638.6 L 728.1 630.2 Z" fill="#6b6420" stroke="#857c2c" stroke-width="0.6" stroke-linejoin="round"/>
<path d="M 744.9 610.0 L 779.8 626.0 L 779.8 658.1 L 744.9 641.4 Z" fill="#cfc758" stroke="#857c2c" stroke-width="0.6" stroke-linejoin="round"/>
<path d="M 744.9 610.0 L 770.0 592.3 L 804.9 612.1 L 779.8 626.0 Z" fill="#e6de72" stroke="#857c2c" stroke-width="0.6" stroke-linejoin="round"/>
<path d="M 779.8 626.0 L 804.9 612.1 L 804.9 647.0 L 779.8 658.1 Z" fill="#c8c050" stroke="#857c2c" stroke-width="0.6" stroke-linejoin="round"/>
<path d="M 781.9 628.8 L 802.8 616.6 L 802.8 645.6 L 781.9 655.3 Z" fill="#a39a3a" stroke="#857c2c" stroke-width="0.6" stroke-linejoin="round"/>
<path d="M 781.9 631.6 L 788.1 628.8 L 790.9 630.9 L 790.9 640.0 L 785.3 642.1 L 781.9 640.7 Z" fill="#e8e070" stroke="#857c2c" stroke-width="0.6" stroke-linejoin="round"/>
<path d="M 726.0 614.9 L 744.9 604.4 L 744.9 641.4 L 728.1 633.0 L 725.3 626.0 Z" fill="#d6ce60" stroke="#857c2c" stroke-width="0.6" stroke-linejoin="round"/>
<path d="M 730.9 610.0 L 744.9 602.3 L 744.9 609.3 L 729.5 617.7 Z" fill="#e4dc6e" stroke="#857c2c" stroke-width="0.6" stroke-linejoin="round"/>
<path d="M 733.0 613.5 L 740.0 610.0 L 740.0 619.1 L 733.0 622.6 Z" fill="#4e4a22" stroke="#857c2c" stroke-width="0.6" stroke-linejoin="round"/>
<path d="M 725.3 612.8 L 729.5 610.0 L 730.2 614.9 L 726.0 617.0 Z" fill="#e8e070" stroke="#857c2c" stroke-width="0.6" stroke-linejoin="round"/>
<path d="M 774.2 667.2 L 774.2 677.7 Q 799.3 678.4 807.7 658.1 L 807.7 648.4 Q 802.1 665.1 774.2 667.2 Z" fill="#a49c38" stroke="#857c2c" stroke-width="0.6" stroke-linejoin="round"/>
<path d="M 792.3 641.4 L 808.4 638.3 L 807.7 654.6 Z" fill="#5c5420" stroke="#857c2c" stroke-width="0.6" stroke-linejoin="round"/>
<path d="M 735.1 649.8 L 742.1 645.6 L 750.5 649.8 L 750.5 658.1 L 742.1 662.3 L 735.1 658.1 Z" fill="#ddd560" stroke="#857c2c" stroke-width="0.6" stroke-linejoin="round"/>
<path d="M 724.0 663.7 L 730.9 659.5 L 739.3 663.7 L 739.3 672.8 L 730.9 677.7 L 724.0 672.8 Z" fill="#d6ce58" stroke="#857c2c" stroke-width="0.6" stroke-linejoin="round"/>
<path d="M 743.5 663.7 L 751.9 659.5 L 760.2 663.7 L 760.2 672.8 L 751.9 678.4 L 743.5 672.8 Z" fill="#d0c850" stroke="#857c2c" stroke-width="0.6" stroke-linejoin="round"/>
<path d="M 735.1 649.8 L 742.1 654.0 L 750.5 649.8 M 742.1 654.0 L 742.1 662.3" fill="none" stroke="#857c2c" stroke-width="0.7"/>
<path d="M 724.0 663.7 L 730.9 667.9 L 739.3 663.7 M 730.9 667.9 L 730.9 677.7" fill="none" stroke="#857c2c" stroke-width="0.7"/>
<path d="M 743.5 663.7 L 751.9 667.9 L 760.2 663.7 M 751.9 667.9 L 751.9 678.4" fill="none" stroke="#857c2c" stroke-width="0.7"/>
<circle cx="730.9" cy="637.2" r="4.6" fill="#2a2812"/><path d="M729.4 634.7 Q733.1 637.2 729.4 639.7" fill="none" stroke="#d8d070" stroke-width="1.1"/>
<circle cx="763.7" cy="653.3" r="4.6" fill="#2a2812"/><path d="M762.2 650.8 Q765.9 653.3 762.2 655.8" fill="none" stroke="#d8d070" stroke-width="1.1"/>
</g>

<!-- diamond -->
<path d="M408.6 569.5 L471.2 534.3 L533.8 569.5 L471.2 604.6 Z" fill="url(#gYe2)" stroke="#555" stroke-width="1.3"/>
<text x="470.3" y="572.8" font-size="10.7" fill="#333" text-anchor="middle" color="#333">Selection of transport</text>
</g>

</svg>
</body></html>
